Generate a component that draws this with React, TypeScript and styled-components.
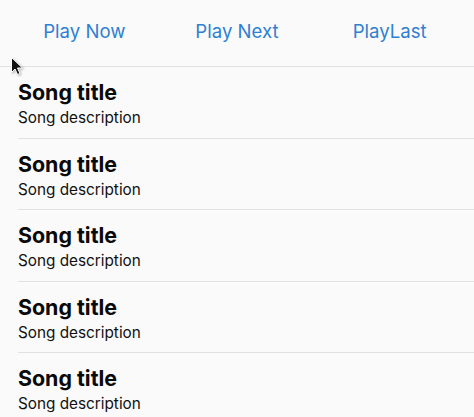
import React from 'react';
import styled, { createGlobalStyle } from 'styled-components';

const GlobalStyle = createGlobalStyle`
  html, body {
    margin: 0;
    padding: 0;
    background-color: #fafafa;
  }
  body {
    font-family: Inter, "Liberation Sans", sans-serif;
    -webkit-font-smoothing: antialiased;
  }
`;

const Screen = styled.div`
  position: relative;
  width: 474px;
  height: 417px;
  overflow: hidden;
  background-color: #fafafa;
`;

const Toolbar = styled.div`
  display: grid;
  grid-template-columns: repeat(3, 1fr);
  align-items: center;
  height: 66px;
  padding: 0 8px;
  border-bottom: 1px solid #e1e1dd;
`;

const ToolbarButton = styled.button`
  border: 0;
  background: none;
  padding: 0;
  margin-top: -4px;
  font-family: Inter, "Liberation Sans", sans-serif;
  font-size: 18.6px;
  color: #2f80d2;
  cursor: pointer;
`;

const SongList = styled.ul`
  list-style: none;
  margin: 0;
  padding: 0 0 0 18px;
`;

const SongRow = styled.li`
  height: 71.6px;
  box-sizing: border-box;
  padding-top: 12px;
  border-bottom: 1px solid #e1e1dd;
`;

const SongTitle = styled.div`
  font-size: 21.4px;
  font-weight: 700;
  color: #0a0a0a;
  line-height: 26px;
`;

const SongDescription = styled.div`
  margin-top: 3px;
  font-size: 15.3px;
  color: #111;
  line-height: 20px;
`;

/* mouse pointer captured in the screenshot */
const Cursor = styled.svg`
  position: absolute;
  left: 10px;
  top: 56px;
  filter: drop-shadow(1px 1px 1px rgba(0, 0, 0, 0.3));
`;

const songs = Array.from({ length: 5 }, () => ({
  title: 'Song title',
  description: 'Song description',
}));

const App = () => {
  return (
    <>
      <GlobalStyle />
      <Screen>
        <Toolbar>
          <ToolbarButton>Play Now</ToolbarButton>
          <ToolbarButton>Play Next</ToolbarButton>
          <ToolbarButton>PlayLast</ToolbarButton>
        </Toolbar>
        <SongList>
          {songs.map((song, i) => (
            <SongRow key={i}>
              <SongTitle>{song.title}</SongTitle>
              <SongDescription>{song.description}</SongDescription>
            </SongRow>
          ))}
        </SongList>
        <Cursor width="14" height="21" viewBox="0 0 14 21">
          <path d="M1.5 1.5 L1.5 16.5 L5 13 L7.5 18.5 L10 17.5 L7.5 12 L12.5 12 Z" fill="#111" stroke="#fff" strokeWidth="1" strokeLinejoin="round" />
        </Cursor>
      </Screen>
    </>
  );
};

export default App;
